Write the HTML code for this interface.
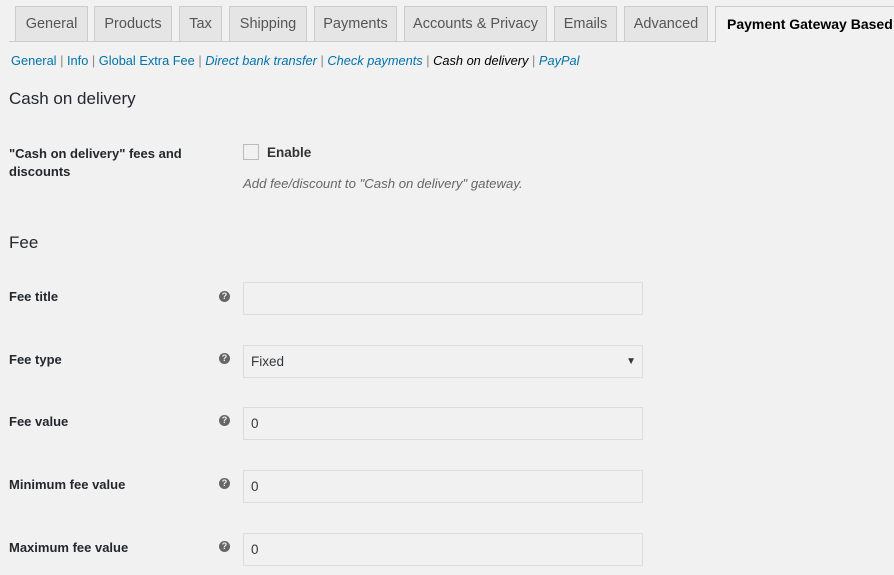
<!DOCTYPE html>
<html><head><style>
body{margin:0;width:894px;height:575px;background:#f1f1f1;font-family:"Liberation Sans",sans-serif;color:#23282d;overflow:hidden;position:relative}
.a{position:absolute;white-space:nowrap}
.tab{position:absolute;top:6px;background:#e5e5e5;border:1px solid #ccc;border-bottom:none;font-size:14.5px;color:#555;line-height:34px;text-align:center;box-sizing:border-box;height:35px;white-space:nowrap;overflow:hidden}
.line{position:absolute;left:9px;right:0;top:41px;border-top:1px solid #ccc}
.sub{top:53px;left:11px;font-size:12.8px;color:#0073aa}
.sub i{font-style:italic}
.sub .s{color:#888}
.lbl{font-size:13px;font-weight:bold;left:9px;color:#23282d}
.inp{position:absolute;left:243px;width:400px;height:33px;border:1px solid #ddd;box-sizing:border-box;background:#f1f1f1;font-size:13.5px;line-height:31px;padding-left:7px;color:#32373c}
.q{position:absolute;left:219px;width:11px;height:11px;border-radius:50%;background:#666;color:#f1f1f1;font-size:9px;font-weight:bold;line-height:11px;text-align:center}
</style></head><body>
<div class="tab" style="left:15px;width:73px">General</div>
<div class="tab" style="left:94px;width:78px">Products</div>
<div class="tab" style="left:179px;width:43px">Tax</div>
<div class="tab" style="left:229px;width:78px">Shipping</div>
<div class="tab" style="left:314px;width:83px">Payments</div>
<div class="tab" style="left:404px;width:143px">Accounts &amp; Privacy</div>
<div class="tab" style="left:554px;width:63px">Emails</div>
<div class="tab" style="left:624px;width:84px">Advanced</div>
<div class="line"></div>
<div class="tab" style="left:715px;width:200px;background:#f1f1f1;color:#000;text-align:left;padding-left:11px;height:36px;font-weight:bold;font-size:14px">Payment Gateway Based Fees</div>
<div class="a sub">General <span class="s">|</span> Info <span class="s">|</span> Global Extra Fee <span class="s">|</span> <i>Direct bank transfer</i> <span class="s">|</span> <i>Check payments</i> <span class="s">|</span> <i style="color:#000">Cash on delivery</i> <span class="s">|</span> <i>PayPal</i></div>
<div class="a" style="left:9px;top:89px;font-size:17px">Cash on delivery</div>
<div class="a lbl" style="top:145px;line-height:18px">"Cash on delivery" fees and<br>discounts</div>
<div class="a" style="left:243px;top:144px;width:16px;height:16px;border:1px solid #bbb;box-sizing:border-box"></div>
<div class="a" style="left:267px;top:145px;font-size:13.5px;font-weight:bold;color:#333">Enable</div>
<div class="a" style="left:243px;top:176px;font-size:13.2px;font-style:italic;color:#666">Add fee/discount to "Cash on delivery" gateway.</div>
<div class="a" style="left:9px;top:233px;font-size:17px">Fee</div>
<div class="a lbl" style="top:289px">Fee title</div><div class="q" style="top:291px">?</div><div class="inp" style="top:282px"></div>
<div class="a lbl" style="top:352px">Fee type</div><div class="q" style="top:353px">?</div><div class="inp" style="top:345px">Fixed<span style="position:absolute;right:6px;font-size:10px">▼</span></div>
<div class="a lbl" style="top:414px">Fee value</div><div class="q" style="top:415px">?</div><div class="inp" style="top:407px">0</div>
<div class="a lbl" style="top:477px">Minimum fee value</div><div class="q" style="top:478px">?</div><div class="inp" style="top:470px">0</div>
<div class="a lbl" style="top:540px">Maximum fee value</div><div class="q" style="top:541px">?</div><div class="inp" style="top:533px">0</div>
</body></html>
